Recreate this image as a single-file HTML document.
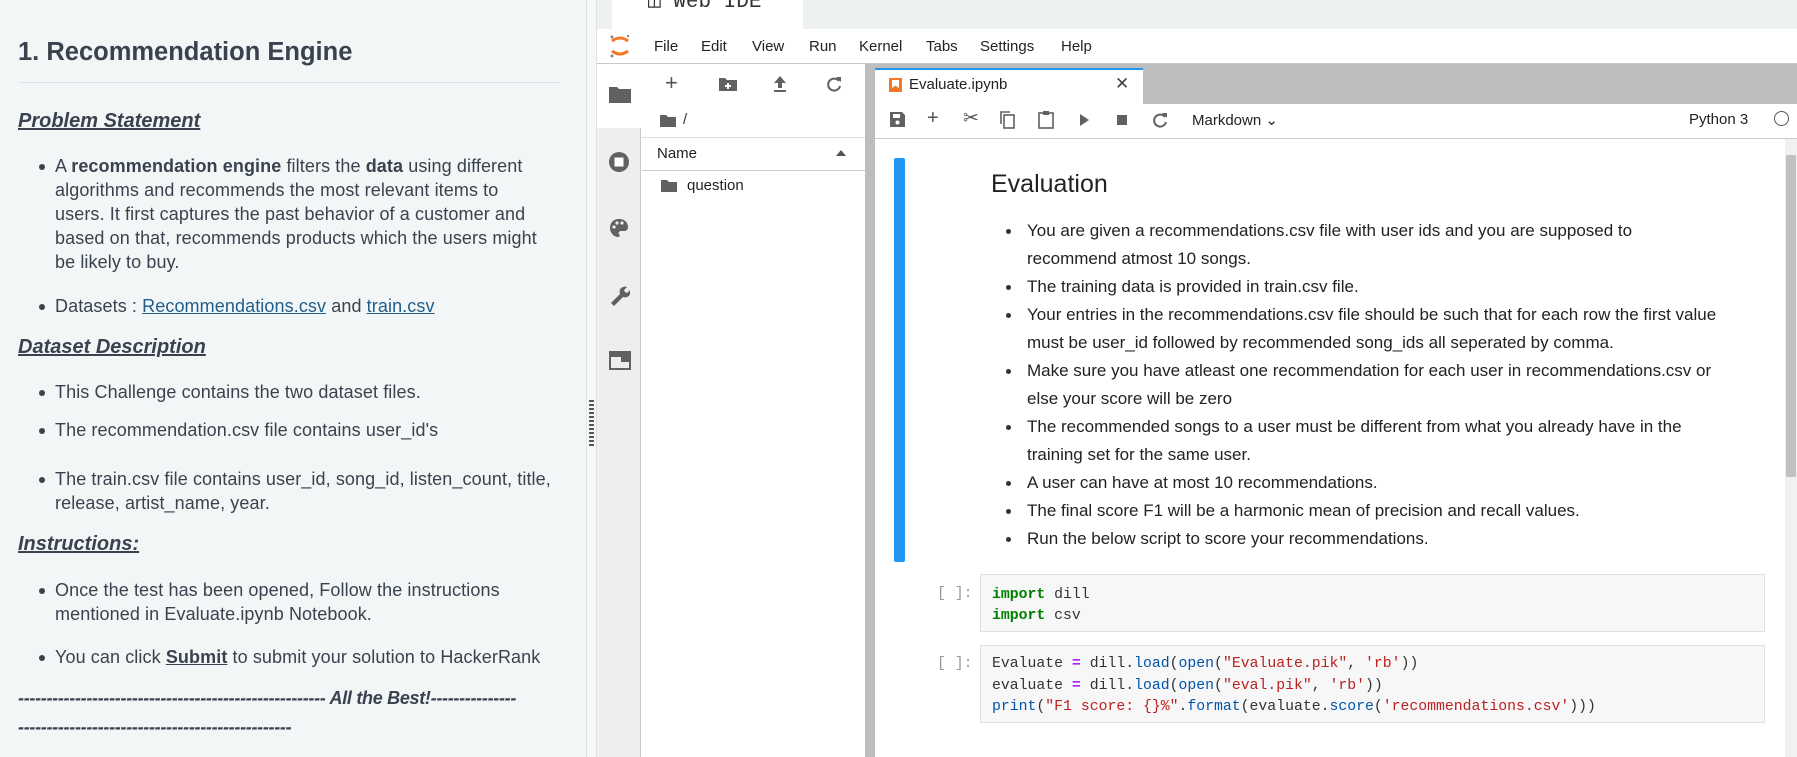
<!DOCTYPE html>
<html><head><meta charset="utf-8">
<style>
*{margin:0;padding:0;box-sizing:border-box}
body{width:1797px;height:757px;overflow:hidden;position:relative;font-family:"Liberation Sans",sans-serif;background:#fff;color:#333}
.a{position:absolute;white-space:nowrap}
#left{position:absolute;left:0;top:0;width:586px;height:757px;background:#f3f6f7;color:#39424e}
#left .t{font-size:18px;line-height:20px;letter-spacing:0.1px}
.dot{position:absolute;width:6px;height:6px;border-radius:50%;background:#39424e}
.h{font-weight:bold;font-style:italic;text-decoration:underline;font-size:20px}
.lnk{color:#1f5e8a;text-decoration:underline}
.menu span{position:absolute;top:38px;font-size:15px;color:#222}
.nb .t{font-size:17px;color:#222}
.nb .d{position:absolute;width:5px;height:5px;border-radius:50%;background:#333}
.code{font-family:"Liberation Mono",monospace;font-size:14.8px;color:#333}
.kw{color:#008000;font-weight:bold}.fn{color:#0055aa}.st{color:#ba2121}.op{color:#aa22ff;font-weight:bold}
</style></head><body>
<div id="left">
 <div class="a" style="left:18px;top:38px;font-size:25.5px;font-weight:bold">1. Recommendation Engine</div>
 <div class="a" style="left:18px;top:82px;width:542px;height:1px;background:#dde2e5"></div>
 <div class="a h" style="left:18px;top:110px">Problem Statement</div>
 <div class="dot" style="left:39px;top:164px"></div>
 <div class="a t" style="left:55px;top:156px">A <b>recommendation engine</b> filters the <b>data</b> using different</div>
 <div class="a t" style="left:55px;top:180px">algorithms and recommends the most relevant items to</div>
 <div class="a t" style="left:55px;top:204px">users. It first captures the past behavior of a customer and</div>
 <div class="a t" style="left:55px;top:228px">based on that, recommends products which the users might</div>
 <div class="a t" style="left:55px;top:252px">be likely to buy.</div>
 <div class="dot" style="left:39px;top:304px"></div>
 <div class="a t" style="left:55px;top:296px">Datasets : <span class="lnk">Recommendations.csv</span> and <span class="lnk">train.csv</span></div>
 <div class="a h" style="left:18px;top:336px">Dataset Description</div>
 <div class="dot" style="left:39px;top:390px"></div>
 <div class="a t" style="left:55px;top:382px">This Challenge contains the two dataset files.</div>
 <div class="dot" style="left:39px;top:428px"></div>
 <div class="a t" style="left:55px;top:420px">The recommendation.csv file contains user_id's</div>
 <div class="dot" style="left:39px;top:477px"></div>
 <div class="a t" style="left:55px;top:469px">The train.csv file contains user_id, song_id, listen_count, title,</div>
 <div class="a t" style="left:55px;top:493px">release, artist_name, year.</div>
 <div class="a h" style="left:18px;top:533px">Instructions:</div>
 <div class="dot" style="left:39px;top:588px"></div>
 <div class="a t" style="left:55px;top:580px">Once the test has been opened, Follow the instructions</div>
 <div class="a t" style="left:55px;top:604px">mentioned in Evaluate.ipynb Notebook.</div>
 <div class="dot" style="left:39px;top:655px"></div>
 <div class="a t" style="left:55px;top:647px">You can click <b style="text-decoration:underline">Submit</b> to submit your solution to HackerRank</div>
 <div class="a" style="left:18px;top:688px;font-size:18px;font-weight:bold;font-style:italic;letter-spacing:-0.3px">------------------------------------------------------ All the Best!---------------</div>
 <div class="a" style="left:18px;top:717px;font-size:18px;font-weight:bold;font-style:italic;letter-spacing:-0.3px">------------------------------------------------</div>
</div>
<div class="a" style="left:586px;top:0;width:11px;height:757px;background:#f7f7f7;border-left:1px solid #e2e2e2;border-right:1px solid #e2e2e2"></div>
<div class="a" style="left:589px;top:400px;width:5px;height:46px;background:repeating-linear-gradient(#555 0 2px,transparent 2px 4px)"></div>

<div class="a" style="left:597px;top:0;width:1200px;height:29px;background:#edf1f2"></div>
<div class="a" style="left:612px;top:0;width:191px;height:29px;background:#fff"></div>
<div class="a" style="left:648px;top:-12px;font-family:'Liberation Mono',monospace;font-size:21px;color:#333">&#9707; Web IDE</div>
<div class="a menu" style="left:597px;top:29px;width:1200px;height:35px;background:#fff;border-bottom:1px solid #c8c8c8"></div>
<svg class="a" style="left:608px;top:33px" width="24" height="26" viewBox="0 0 24 26"><path d="M4 8 Q12 2 20 8" stroke="#f37726" stroke-width="3" fill="none"/><path d="M4 18 Q12 24 20 18" stroke="#f37726" stroke-width="3" fill="none"/><circle cx="4" cy="4" r="1.5" fill="#888"/><circle cx="20" cy="3" r="1.2" fill="#888"/><circle cx="4" cy="23" r="1.5" fill="#888"/></svg>
<div class="menu"><span style="left:654px">File</span><span style="left:701px">Edit</span><span style="left:752px">View</span><span style="left:809px">Run</span><span style="left:859px">Kernel</span><span style="left:926px">Tabs</span><span style="left:980px">Settings</span><span style="left:1061px">Help</span></div>

<div class="a" style="left:597px;top:64px;width:44px;height:693px;background:#eeeeee;border-right:1px solid #c8c8c8"></div>
<div class="a" style="left:597px;top:64px;width:45px;height:64px;background:#fff"></div>
<svg class="a" style="left:609px;top:85px" width="22" height="18"><path d="M0 2h8l2 2h12v14H0z" fill="#616161"/></svg>
<svg class="a" style="left:608px;top:151px" width="22" height="22"><circle cx="11" cy="11" r="10" fill="#616161"/><rect x="6.5" y="6.5" width="9" height="9" fill="#fff"/></svg>
<svg class="a" style="left:609px;top:218px" width="20" height="20"><path d="M10 1C4 1 1 5 1 10s4 9 8 9c2 0 2-2 1-3s0-3 2-3h3c3 0 4-2 4-4 0-5-4-8-9-8z" fill="#616161"/><circle cx="5" cy="9" r="1.6" fill="#eee"/><circle cx="8" cy="5" r="1.6" fill="#eee"/><circle cx="13" cy="5" r="1.6" fill="#eee"/></svg>
<svg class="a" style="left:608px;top:284px" width="22" height="22"><path d="M3 19l9-9c-1-3 0-6 3-7 1-.5 3-.5 4 0l-3 3 1 2 2 1 3-3c.5 1 .5 3 0 4-1 3-4 4-7 3l-9 9z" fill="#616161"/></svg>
<svg class="a" style="left:609px;top:351px" width="22" height="19"><rect x="1" y="1" width="20" height="17" fill="none" stroke="#616161" stroke-width="2"/><rect x="1" y="1" width="20" height="5" fill="#616161"/><rect x="12" y="6" width="9" height="5" fill="#616161"/></svg>

<div class="a" style="left:642px;top:64px;width:223px;height:693px;background:#fff"></div>
<div class="a" style="left:665px;top:70px;font-size:22px;color:#555">+</div>
<svg class="a" style="left:719px;top:77px" width="18" height="14"><path d="M0 1h6l2 2h10v11H0z" fill="#616161"/><path d="M9 6v6M6 9h6" stroke="#fff" stroke-width="2"/></svg>
<svg class="a" style="left:773px;top:76px" width="14" height="16"><path d="M7 0l6 7H9v5H5V7H1z" fill="#616161"/><rect x="1" y="14" width="12" height="2" fill="#616161"/></svg>
<svg class="a" style="left:826px;top:76px" width="16" height="16"><path d="M13 5A6 6 0 1 0 14 10" stroke="#616161" stroke-width="2" fill="none"/><path d="M10 1l5 0 0 5z" fill="#616161"/></svg>
<svg class="a" style="left:660px;top:114px" width="16" height="13"><path d="M0 1h6l2 2h8v10H0z" fill="#616161"/></svg>
<div class="a" style="left:683px;top:111px;font-size:15px;color:#333">/</div>
<div class="a" style="left:642px;top:137px;width:223px;height:34px;border-top:1px solid #ddd;border-bottom:1px solid #ccc"></div>
<div class="a" style="left:657px;top:145px;font-size:15px;color:#222">Name</div>
<svg class="a" style="left:836px;top:150px" width="10" height="6"><path d="M0 6L5 0 10 6z" fill="#555"/></svg>
<svg class="a" style="left:661px;top:179px" width="16" height="13"><path d="M0 1h6l2 2h8v10H0z" fill="#616161"/></svg>
<div class="a" style="left:687px;top:177px;font-size:15px;color:#222">question</div>

<div class="a" style="left:865px;top:64px;width:10px;height:693px;background:#bdbdbd"></div>
<div class="a" style="left:875px;top:64px;width:922px;height:40px;background:#bdbdbd"></div>
<div class="a" style="left:875px;top:68px;width:268px;height:36px;background:#fff;border-top:2px solid #2196f3"></div>
<div class="a" style="left:889px;top:78px;width:13px;height:14px;background:#f37726"></div>
<div class="a" style="left:892px;top:80px;width:7px;height:8px;background:#fff;clip-path:polygon(0 0,100% 0,100% 100%,50% 70%,0 100%)"></div>
<div class="a" style="left:909px;top:76px;font-size:15px;color:#222">Evaluate.ipynb</div>
<div class="a" style="left:1115px;top:74px;font-size:17px;color:#444">✕</div>
<div class="a" style="left:875px;top:104px;width:922px;height:35px;background:#fff;border-bottom:1px solid #ccc"></div>
<svg class="a" style="left:890px;top:112px" width="15" height="15"><path d="M0 0h12l3 3v12H0z" fill="#616161"/><rect x="3" y="2" width="7" height="4" fill="#fff"/><circle cx="7.5" cy="10.5" r="2" fill="#fff"/></svg>
<div class="a" style="left:927px;top:107px;font-size:20px;color:#555">+</div>
<div class="a" style="left:963px;top:107px;font-size:19px;color:#555">✂</div>
<svg class="a" style="left:1000px;top:111px" width="15" height="18"><rect x="4" y="4" width="10" height="13" fill="none" stroke="#616161" stroke-width="1.6"/><path d="M1 13V1h9" stroke="#616161" stroke-width="1.6" fill="none"/></svg>
<svg class="a" style="left:1038px;top:110px" width="16" height="19"><rect x="1" y="3" width="14" height="15" fill="none" stroke="#616161" stroke-width="1.6"/><rect x="5" y="1" width="6" height="4" fill="#616161"/></svg>
<svg class="a" style="left:1080px;top:114px" width="9" height="12"><path d="M0 0l9 6-9 6z" fill="#616161"/></svg>
<div class="a" style="left:1117px;top:115px;width:10px;height:10px;background:#616161"></div>
<svg class="a" style="left:1152px;top:112px" width="16" height="16"><path d="M13 5A6 6 0 1 0 14 10" stroke="#616161" stroke-width="2" fill="none"/><path d="M10 1l5 0 0 5z" fill="#616161"/></svg>
<div class="a" style="left:1192px;top:111px;font-size:15px;color:#222">Markdown ⌄</div>
<div class="a" style="left:1689px;top:111px;font-size:15px;color:#222">Python 3</div>
<div class="a" style="left:1774px;top:111px;width:15px;height:15px;border:1.5px solid #555;border-radius:50%"></div>

<div class="a" style="left:1785px;top:139px;width:12px;height:618px;background:#f1f1f1"></div>
<div class="a" style="left:1786px;top:155px;width:10px;height:322px;background:#c1c1c1"></div>
<div class="a" style="left:894px;top:158px;width:11px;height:404px;background:#2196f3;border-radius:2px"></div>
<div class="a" style="left:991px;top:170px;font-size:25px;color:#222">Evaluation</div>
<div class="nb">
 <div class="d" style="left:1006px;top:229px"></div><div class="a t" style="left:1027px;top:221px">You are given a recommendations.csv file with user ids and you are supposed to</div>
 <div class="a t" style="left:1027px;top:249px">recommend atmost 10 songs.</div>
 <div class="d" style="left:1006px;top:285px"></div><div class="a t" style="left:1027px;top:277px">The training data is provided in train.csv file.</div>
 <div class="d" style="left:1006px;top:313px"></div><div class="a t" style="left:1027px;top:305px">Your entries in the recommendations.csv file should be such that for each row the first value</div>
 <div class="a t" style="left:1027px;top:333px">must be user_id followed by recommended song_ids all seperated by comma.</div>
 <div class="d" style="left:1006px;top:369px"></div><div class="a t" style="left:1027px;top:361px">Make sure you have atleast one recommendation for each user in recommendations.csv or</div>
 <div class="a t" style="left:1027px;top:389px">else your score will be zero</div>
 <div class="d" style="left:1006px;top:425px"></div><div class="a t" style="left:1027px;top:417px">The recommended songs to a user must be different from what you already have in the</div>
 <div class="a t" style="left:1027px;top:445px">training set for the same user.</div>
 <div class="d" style="left:1006px;top:481px"></div><div class="a t" style="left:1027px;top:473px">A user can have at most 10 recommendations.</div>
 <div class="d" style="left:1006px;top:509px"></div><div class="a t" style="left:1027px;top:501px">The final score F1 will be a harmonic mean of precision and recall values.</div>
 <div class="d" style="left:1006px;top:537px"></div><div class="a t" style="left:1027px;top:529px">Run the below script to score your recommendations.</div>
</div>
<div class="a code" style="left:937px;top:586px;color:#999">[ ]:</div>
<div class="a" style="left:980px;top:574px;width:785px;height:58px;background:#f7f7f7;border:1px solid #e0e0e0"></div>
<div class="a code" style="left:992px;top:585px;line-height:21px"><span class="kw">import</span> dill<br><span class="kw">import</span> csv</div>
<div class="a code" style="left:937px;top:656px;color:#999">[ ]:</div>
<div class="a" style="left:980px;top:645px;width:785px;height:78px;background:#f7f7f7;border:1px solid #e0e0e0"></div>
<div class="a code" style="left:992px;top:654px;line-height:21.5px">Evaluate <span class="op">=</span> dill.<span class="fn">load</span>(<span class="fn">open</span>(<span class="st">"Evaluate.pik"</span>, <span class="st">'rb'</span>))<br>evaluate <span class="op">=</span>  dill.<span class="fn">load</span>(<span class="fn">open</span>(<span class="st">"eval.pik"</span>, <span class="st">'rb'</span>))<br><span class="fn">print</span>(<span class="st">"F1 score: {}%"</span>.<span class="fn">format</span>(evaluate.<span class="fn">score</span>(<span class="st">'recommendations.csv'</span>)))</div>
</body></html>
